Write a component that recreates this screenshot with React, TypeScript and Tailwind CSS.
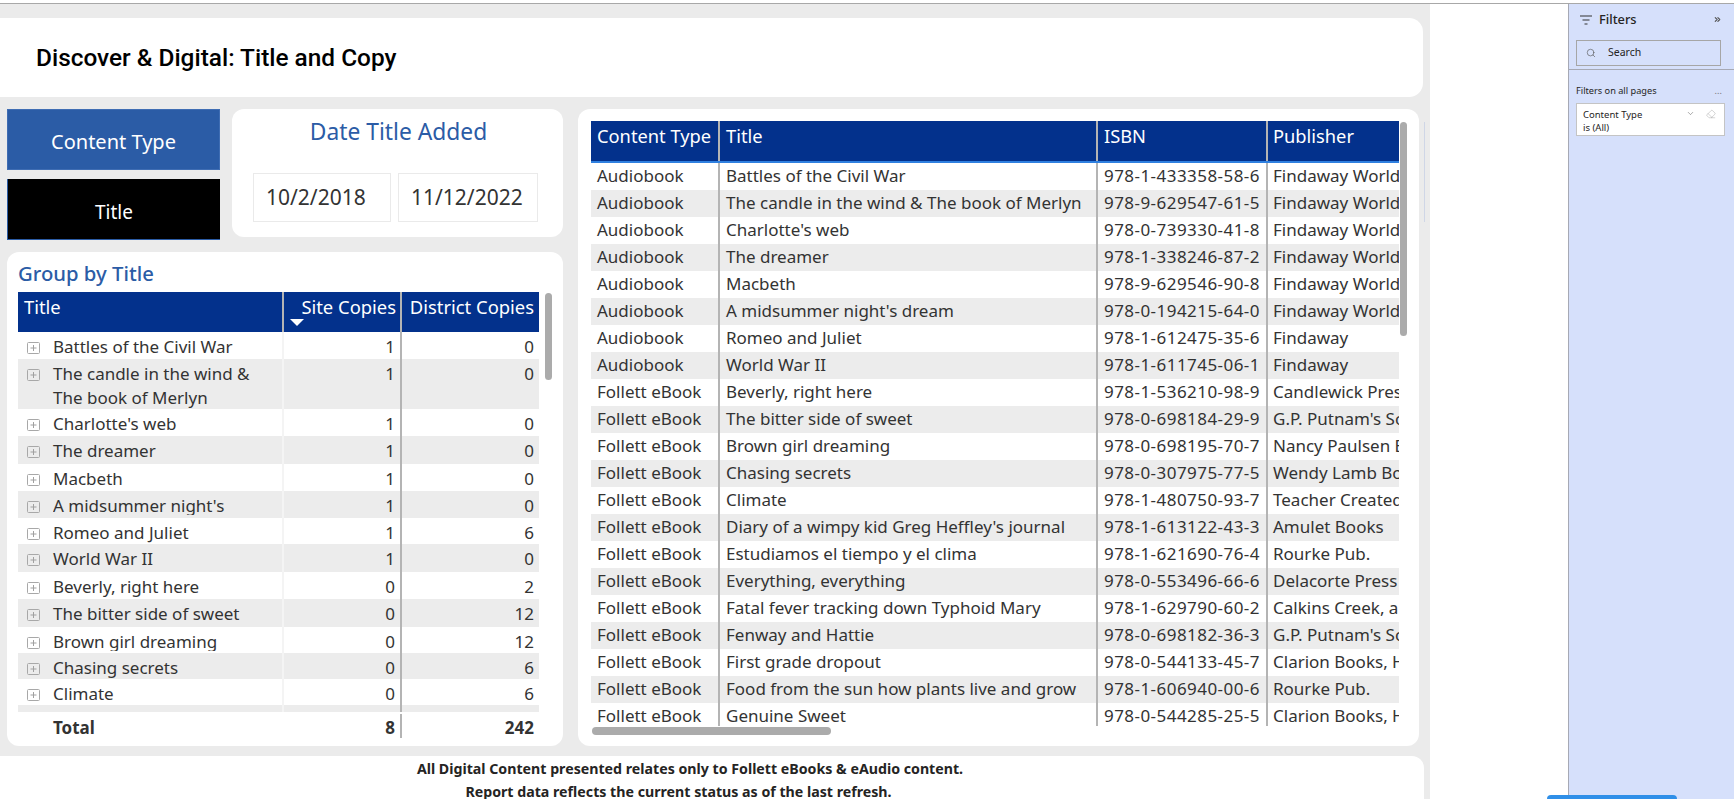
import { ChevronDown, ChevronsRight, Eraser, Search } from "lucide-react";

const groupRows = [
  { title: "Battles of the Civil War", site: 1, district: 0, h: "h-[27px]" },
  { title: "The candle in the wind & The book of Merlyn", site: 1, district: 0, h: "h-[50px]" },
  { title: "Charlotte's web", site: 1, district: 0, h: "h-[27px]" },
  { title: "The dreamer", site: 1, district: 0, h: "h-[28px]" },
  { title: "Macbeth", site: 1, district: 0, h: "h-[27px]" },
  { title: "A midsummer night's", site: 1, district: 0, h: "h-[27px]", clip: true },
  { title: "Romeo and Juliet", site: 1, district: 6, h: "h-[26px]" },
  { title: "World War II", site: 1, district: 0, h: "h-[28px]" },
  { title: "Beverly, right here", site: 0, district: 2, h: "h-[27px]" },
  { title: "The bitter side of sweet", site: 0, district: 12, h: "h-[28px]" },
  { title: "Brown girl dreaming", site: 0, district: 12, h: "h-[26px]", clip: true },
  { title: "Chasing secrets", site: 0, district: 6, h: "h-[26px]" },
  { title: "Climate", site: 0, district: 6, h: "h-[26px]" },
];

const detailRows = [
  ["Audiobook", "Battles of the Civil War", "978-1-433358-58-6", "Findaway World, LLC"],
  ["Audiobook", "The candle in the wind & The book of Merlyn", "978-9-629547-61-5", "Findaway World, LLC"],
  ["Audiobook", "Charlotte's web", "978-0-739330-41-8", "Findaway World, LLC"],
  ["Audiobook", "The dreamer", "978-1-338246-87-2", "Findaway World, LLC"],
  ["Audiobook", "Macbeth", "978-9-629546-90-8", "Findaway World, LLC"],
  ["Audiobook", "A midsummer night's dream", "978-0-194215-64-0", "Findaway World, LLC"],
  ["Audiobook", "Romeo and Juliet", "978-1-612475-35-6", "Findaway"],
  ["Audiobook", "World War II", "978-1-611745-06-1", "Findaway"],
  ["Follett eBook", "Beverly, right here", "978-1-536210-98-9", "Candlewick Press"],
  ["Follett eBook", "The bitter side of sweet", "978-0-698184-29-9", "G.P. Putnam's Sons"],
  ["Follett eBook", "Brown girl dreaming", "978-0-698195-70-7", "Nancy Paulsen Books"],
  ["Follett eBook", "Chasing secrets", "978-0-307975-77-5", "Wendy Lamb Books"],
  ["Follett eBook", "Climate", "978-1-480750-93-7", "Teacher Created"],
  ["Follett eBook", "Diary of a wimpy kid Greg Heffley's journal", "978-1-613122-43-3", "Amulet Books"],
  ["Follett eBook", "Estudiamos el tiempo y el clima", "978-1-621690-76-4", "Rourke Pub."],
  ["Follett eBook", "Everything, everything", "978-0-553496-66-6", "Delacorte Press"],
  ["Follett eBook", "Fatal fever tracking down Typhoid Mary", "978-1-629790-60-2", "Calkins Creek, an"],
  ["Follett eBook", "Fenway and Hattie", "978-0-698182-36-3", "G.P. Putnam's Sons"],
  ["Follett eBook", "First grade dropout", "978-0-544133-45-7", "Clarion Books, HMH"],
  ["Follett eBook", "Food from the sun how plants live and grow", "978-1-606940-00-6", "Rourke Pub."],
  ["Follett eBook", "Genuine Sweet", "978-0-544285-25-5", "Clarion Books, HMH"],
];

const ui = "font-['Noto_Sans','Open_Sans',sans-serif]";

function PlusBox() {
  return (
    <svg width="13" height="12" viewBox="0 0 13 12" className="shrink-0">
      <rect x="0.5" y="0.5" width="12" height="11" rx="1" fill="none" stroke="#a8a8a8" />
      <path d="M6.5 3v6M3.5 6h6" stroke="#a0a0a0" fill="none" />
    </svg>
  );
}

function FilterLines() {
  return (
    <svg width="12" height="10" viewBox="0 0 12 10">
      <path d="M0 1h12M2.5 5h7M4.5 9h3" stroke="#333" strokeWidth="1.2" fill="none" />
    </svg>
  );
}

function GroupTable() {
  return (
    <div className="mt-[5px] w-[521px] text-[17px] text-[#333]">
      <div className="flex h-[40px] bg-[#03318c] text-[18.4px] text-white">
        <div className="w-[266px] border-r-2 border-[#b4b4b4] pl-[6px] pt-[1px]">Title</div>
        <div className="relative w-[118px] border-r-2 border-[#b4b4b4] pr-[4px] pt-[1px] text-right">
          Site Copies
          <span className="absolute bottom-[6px] left-[6px] h-0 w-0 border-x-[7px] border-t-[7px] border-x-transparent border-t-white" />
        </div>
        <div className="flex-1 pr-[5px] pt-[1px] text-right">District Copies</div>
      </div>
      {groupRows.map((row, i) => (
        <div key={row.title} className={`flex ${row.h} ${i % 2 === 1 ? "bg-[#ececec]" : "bg-white"}`}>
          <div className="flex w-[266px] items-start border-r-2 border-[#f4f4f4] pl-[9px]">
            <span className="mt-[10px]">
              <PlusBox />
            </span>
            <span className={`ml-[13px] w-[208px] pt-[3px] leading-[24px] ${row.clip ? "h-[24px] overflow-hidden" : ""}`}>
              {row.title}
            </span>
          </div>
          <div className="w-[118px] border-r-2 border-[#b4b4b4] pr-[5px] pt-[3px] text-right leading-[24px]">{row.site}</div>
          <div className="flex-1 pr-[5px] pt-[3px] text-right leading-[24px]">{row.district}</div>
        </div>
      ))}
      <div className="flex h-[7px] bg-[#ececec]">
        <div className="w-[266px] border-r-2 border-[#f4f4f4]" />
        <div className="w-[118px] border-r-2 border-[#b4b4b4]" />
      </div>
      <div className="flex h-[26px] bg-white pt-[2px] font-bold leading-[28px]">
        <div className="w-[266px] pl-[35px]">Total</div>
        <div className="w-[118px] border-r-2 border-[#b4b4b4] pr-[5px] text-right">8</div>
        <div className="flex-1 pr-[5px] text-right">242</div>
      </div>
    </div>
  );
}

function DetailTable() {
  return (
    <div className="h-[605px] w-[808px] overflow-hidden text-[17px] text-[#333]">
      <div className="flex h-[42px] border-b-2 border-[#2f80e0] bg-[#03318c] text-[18.3px] text-white">
        <div className="w-[129px] shrink-0 border-r-2 border-[#b4b4b4] pl-[6px] pt-[1px]">Content Type</div>
        <div className="w-[378px] shrink-0 border-r-2 border-[#b4b4b4] pl-[6px] pt-[1px]">Title</div>
        <div className="w-[170px] shrink-0 border-r-2 border-[#b4b4b4] pl-[6px] pt-[1px]">ISBN</div>
        <div className="flex-1 pl-[5px] pt-[1px]">Publisher</div>
      </div>
      {detailRows.map((row, i) => (
        <div key={row[2]} className={`flex h-[27px] leading-[26px] ${i % 2 === 1 ? "bg-[#ececec]" : "bg-white"}`}>
          <div className="w-[129px] shrink-0 border-r-2 border-[#b4b4b4] pl-[6px]">{row[0]}</div>
          <div className="w-[378px] shrink-0 whitespace-nowrap border-r-2 border-[#b4b4b4] pl-[6px]">{row[1]}</div>
          <div className="w-[170px] shrink-0 whitespace-nowrap border-r-2 border-[#b4b4b4] pl-[6px] tracking-[0.45px]">{row[2]}</div>
          <div className="min-w-0 flex-1 overflow-hidden whitespace-nowrap pl-[5px]">{row[3]}</div>
        </div>
      ))}
    </div>
  );
}

function FilterPane() {
  return (
    <aside className="relative w-[166px] shrink-0 border-l border-[#a6a9b5] bg-[#d6e0fb] text-[#252423]">
      <div className="flex h-[36px] items-center justify-between pb-[5px] pl-[11px] pr-[12px]">
        <div className="flex items-center gap-[7px] text-[12.8px] font-medium">
          <FilterLines />
          Filters
        </div>
        <ChevronsRight size={9} strokeWidth={3} className="text-[#555]" />
      </div>
      <div className="mx-[7px] flex h-[26px] w-[145px] items-center border border-[#a6a6a6] pl-[9px] text-[10.5px]">
        <Search size={10} strokeWidth={1.5} className="text-[#555]" />
        <span className="ml-[12px]">Search</span>
      </div>
      <div className="mt-[3px] border-t border-[#a6a9b5] px-[7px] pt-[14px]">
        <div className="flex items-center justify-between pr-[5px] text-[9.2px] leading-[13px]">
          <span>Filters on all pages</span>
          <span className="text-[#777]">...</span>
        </div>
        <div className="relative mt-[6px] h-[33px] w-[149px] border border-[#c4c4c4] bg-white pl-[6px] pt-[5px] text-[9.5px] leading-[12.5px]">
          <div>Content Type</div>
          <div>is (All)</div>
          <ChevronDown size={9} strokeWidth={1.2} className="absolute right-[29px] top-[5px] text-[#444]" />
          <Eraser size={10} strokeWidth={1} className="absolute right-[8px] top-[5px] text-[#999]" />
        </div>
      </div>
      <div className="absolute bottom-0 left-[-22px] h-[4px] w-[130px] rounded-t-sm bg-[#2f8fe8]" />
    </aside>
  );
}

export default function App() {
  return (
    <div className={`flex h-[799px] w-[1734px] overflow-hidden bg-white ${ui}`}>
      <div className="flex min-w-0 flex-1 flex-col">
        <div className="h-[3px] shrink-0 bg-white" />
        <div className="flex min-h-0 flex-1 flex-col border-t border-[#a8a8a8]">
          <div className="flex min-h-0 flex-1">
            <main className="w-[1430px] shrink-0 bg-[#ebebeb] pt-[14px]">
              <div className="flex h-[79px] w-[1423px] items-center rounded-r-[14px] bg-white pl-[36px] pt-[2px] font-['Roboto',sans-serif] text-[24.4px] font-medium text-black">
                Discover &amp; Digital: Title and Copy
              </div>
              <div className="mt-[12px] flex h-[637px]">
                <div className="ml-[7px] flex w-[556px] flex-col">
                  <div className="flex h-[131px]">
                    <div className="flex w-[213px] flex-col">
                      <div className="flex h-[61px] items-center justify-center border border-[#3f6db3] bg-[#2b5ca6] pt-[6px] text-[20px] text-white">
                        Content Type
                      </div>
                      <div className="mt-[9px] flex h-[62px] items-center justify-center border-b border-l border-[#2b5ca6] bg-black pt-[6px] text-[19px] text-white">
                        Title
                      </div>
                    </div>
                    <div className="ml-[12px] h-[128px] w-[331px] rounded-[12px] bg-white">
                      <div className="pl-[2px] pt-[5px] text-center text-[22.8px] leading-[36px] text-[#2b5ca6]">Date Title Added</div>
                      <div className="mt-[23px] flex gap-[7px] pl-[21px] text-[21px] text-[#333]">
                        <div className="flex h-[49px] w-[138px] items-center border border-[#eaeaea] pl-[12px]">10/2/2018</div>
                        <div className="flex h-[49px] w-[140px] items-center border border-[#eaeaea] pl-[12px]">11/12/2022</div>
                      </div>
                    </div>
                  </div>
                  <div className="relative mt-[12px] flex-1 rounded-[12px] bg-white pl-[11px] pt-[7px]">
                    <div className="text-[20.3px] font-medium leading-[28px] text-[#2b5ca6]">Group by Title</div>
                    <GroupTable />
                    <div className="absolute left-[538px] top-[41px] h-[87px] w-[7px] rounded-full bg-[#ababab]" />
                  </div>
                </div>
                <div className="relative ml-[15px] h-[637px] w-[841px] rounded-[12px] bg-white pl-[13px] pt-[12px]">
                  <DetailTable />
                  <div className="absolute left-[822px] top-[13px] h-[214px] w-[7px] rounded-full bg-[#ababab]" />
                  <div className="absolute left-[14px] top-[618px] h-[8px] w-[239px] rounded-full bg-[#ababab]" />
                </div>
                <div className="ml-[5px] mt-[13px] h-[100px] w-px bg-[#cfd6e6]" />
              </div>
              <div className="mt-[10px] h-[60px] w-[1424px] rounded-r-[12px] bg-white pt-[1px] text-center text-[14.2px] font-bold leading-[23px] text-[#252423]">
                <div className="pr-[44px]">All Digital Content presented relates only to Follett eBooks &amp; eAudio content.</div>
                <div className="pr-[67px]">Report data reflects the current status as of the last refresh.</div>
              </div>
            </main>
            <div className="flex-1 bg-white" />
            <FilterPane />
          </div>
        </div>
      </div>
    </div>
  );
}
